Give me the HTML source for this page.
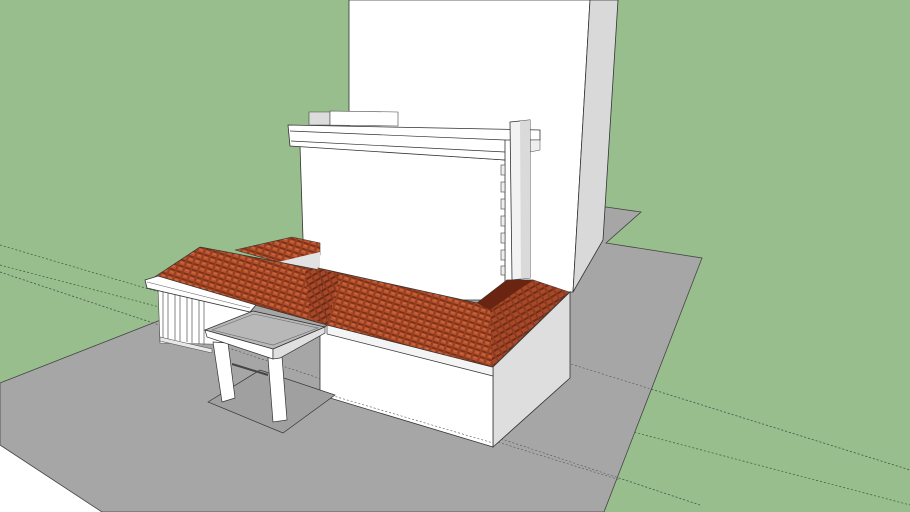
<!DOCTYPE html>
<html><head><style>html,body{margin:0;padding:0;background:#98be8d;}svg{display:block}</style></head>
<body>
<svg width="910" height="512" viewBox="0 0 910 512" xmlns="http://www.w3.org/2000/svg">
<defs>
<pattern id="tile" width="7" height="6" patternUnits="userSpaceOnUse" patternTransform="rotate(18)">
<rect width="7" height="6" fill="#b8532f"/>
<rect y="4" width="7" height="2" fill="#7e3119"/>
<rect x="5" width="2" height="6" fill="#96401f"/>
<rect x="1" y="1" width="3" height="1" fill="#d06c44"/>
</pattern>
<pattern id="tile2" width="7" height="6" patternUnits="userSpaceOnUse" patternTransform="rotate(-30)">
<rect width="7" height="6" fill="#a9482a"/>
<rect y="4" width="7" height="2" fill="#6e2a15"/>
<rect x="5" width="2" height="6" fill="#8a3a1c"/>
</pattern>
</defs>
<rect width="910" height="512" fill="#98be8d"/>
<g stroke="#3a5a3a" stroke-width="0.7" stroke-dasharray="2,2" fill="none">
<line x1="0" y1="245" x2="490" y2="390"/>
<line x1="0" y1="265" x2="910" y2="505"/>
<line x1="0" y1="272" x2="700" y2="505"/>
<line x1="430" y1="320" x2="910" y2="470"/>
</g>
<polygon points="0,445 102,512 0,512" fill="#ffffff"/>
<polygon points="0,383 250,285 606,207 641,212 606,243 702,258 604,512 102,512 0,445" fill="#a6a6a6" stroke="#444" stroke-width="0.8"/>
<g stroke="#555" stroke-width="0.6" stroke-dasharray="2,2" fill="none">
<line x1="430" y1="320" x2="910" y2="470"/>
<line x1="330" y1="390" x2="620" y2="480"/>
<line x1="0" y1="272" x2="700" y2="505"/>
</g>
<!-- tower -->
<polygon points="349,0 590,0 573,292 349,292" fill="#ffffff" stroke="#333" stroke-width="0.8"/>
<polygon points="590,0 618,0 603,240 573,292" fill="#d9d9d9" stroke="#333" stroke-width="0.8"/>
<!-- mid building -->
<polygon points="300,146 505,160 505,300 305,300" fill="#ffffff" stroke="#333" stroke-width="0.8"/>
<polygon points="309,112 330,112 330,125 309,125" fill="#dcdcdc" stroke="#444" stroke-width="0.6"/>
<polygon points="330,111 398,112 398,126 330,125" fill="#ffffff" stroke="#444" stroke-width="0.6"/>
<polygon points="288,125 540,130 540,140 505,140 505,160 290,146" fill="#ffffff" stroke="#333" stroke-width="0.8"/>
<line x1="290" y1="131" x2="505" y2="140" stroke="#333" stroke-width="0.7"/>
<line x1="291" y1="141" x2="505" y2="152" stroke="#333" stroke-width="0.7"/>
<polygon points="530,140 540,140 540,150 530,152" fill="#eee" stroke="#444" stroke-width="0.5"/>
<polygon points="510,122 530,120 530,278 512,280" fill="#f2f2f2" stroke="#333" stroke-width="0.8"/>
<polygon points="520,121 530,120 530,278 521,279" fill="#dadada"/>
<g fill="#eee" stroke="#444" stroke-width="0.6">
<rect x="501" y="165" width="4" height="10"/><rect x="501" y="182" width="4" height="10"/><rect x="501" y="199" width="4" height="10"/><rect x="501" y="216" width="4" height="10"/><rect x="501" y="233" width="4" height="10"/><rect x="501" y="250" width="4" height="10"/><rect x="501" y="266" width="4" height="9"/>
</g>
<polygon points="493,367 570,292 570,378 493,447" fill="#dedede" stroke="#333" stroke-width="0.8"/>
<polygon points="327,325 493,367 493,447 320,395 320,330" fill="#ffffff" stroke="#333" stroke-width="0.8"/>
<line x1="320" y1="392" x2="493" y2="443" stroke="#555" stroke-width="0.6" stroke-dasharray="2,2"/>
<polygon points="327,325 493,367 493,376 327,334" fill="#f4f4f4" stroke="#333" stroke-width="0.7"/>
<polygon points="235,250 292,237 320,243 320,255 278,262" fill="url(#tile)" stroke="#333" stroke-width="0.6"/>
<polygon points="278,262 320,252 320,270 300,266" fill="#e2e2e2"/>
<polygon points="318,268 477,303 507,280 533,280 569,292 492,367 327,325" fill="url(#tile)" stroke="#333" stroke-width="0.7"/>
<polygon points="477,303 507,280 533,280 490,310" fill="#6a2412"/>
<polygon points="318,268 340,275 327,325 320,320" fill="url(#tile2)"/>
<polygon points="490,310 533,280 569,292 492,367" fill="url(#tile2)" opacity="0.9"/>
<polygon points="153,278 200,247 232,253 320,270 327,325 255,305" fill="url(#tile)" stroke="#333" stroke-width="0.7"/>
<polygon points="305,268 320,270 327,325 310,318" fill="url(#tile2)"/>
<polygon points="158,288 255,312 255,345 160,343" fill="#ffffff" stroke="#444" stroke-width="0.6"/>
<g stroke="#666" stroke-width="0.8">
<line x1="163" y1="289" x2="163" y2="338"/><line x1="168" y1="290" x2="168" y2="339"/>
<line x1="175" y1="292" x2="175" y2="340"/><line x1="180" y1="293" x2="180" y2="341"/>
<line x1="187" y1="295" x2="187" y2="342"/><line x1="192" y1="296" x2="192" y2="343"/>
<line x1="199" y1="297" x2="199" y2="344"/><line x1="204" y1="298" x2="204" y2="345"/>
</g>
<polygon points="160,337 212,349 212,353 160,341" fill="#e8e8e8" stroke="#444" stroke-width="0.5"/>
<polygon points="145,280 158,276 256,305 250,312 147,288" fill="#ffffff" stroke="#333" stroke-width="0.8"/>
<line x1="147" y1="282" x2="250" y2="308" stroke="#555" stroke-width="0.5"/>
<polygon points="208,402 260,370 335,395 283,433" fill="#a0a0a0" stroke="#333" stroke-width="0.7"/>
<polygon points="213,342 228,343 235,398 222,402" fill="#ffffff" stroke="#333" stroke-width="0.7"/>
<polygon points="268,358 282,357 287,420 273,422" fill="#ffffff" stroke="#333" stroke-width="0.7"/>
<line x1="232" y1="364" x2="268" y2="375" stroke="#444" stroke-width="2"/>
<polygon points="205,330 253,311 325,327 273,349" fill="#b8b8b8" stroke="#333" stroke-width="0.8"/>
<polygon points="212,330 254,314 318,328 273,345" fill="none" stroke="#666" stroke-width="0.6"/>
<polygon points="205,330 273,349 273,359 207,337" fill="#ffffff" stroke="#333" stroke-width="0.7"/>
<polygon points="273,349 325,327 325,333 280,358 273,359" fill="#e0e0e0" stroke="#333" stroke-width="0.7"/>
</svg>
</body></html>
